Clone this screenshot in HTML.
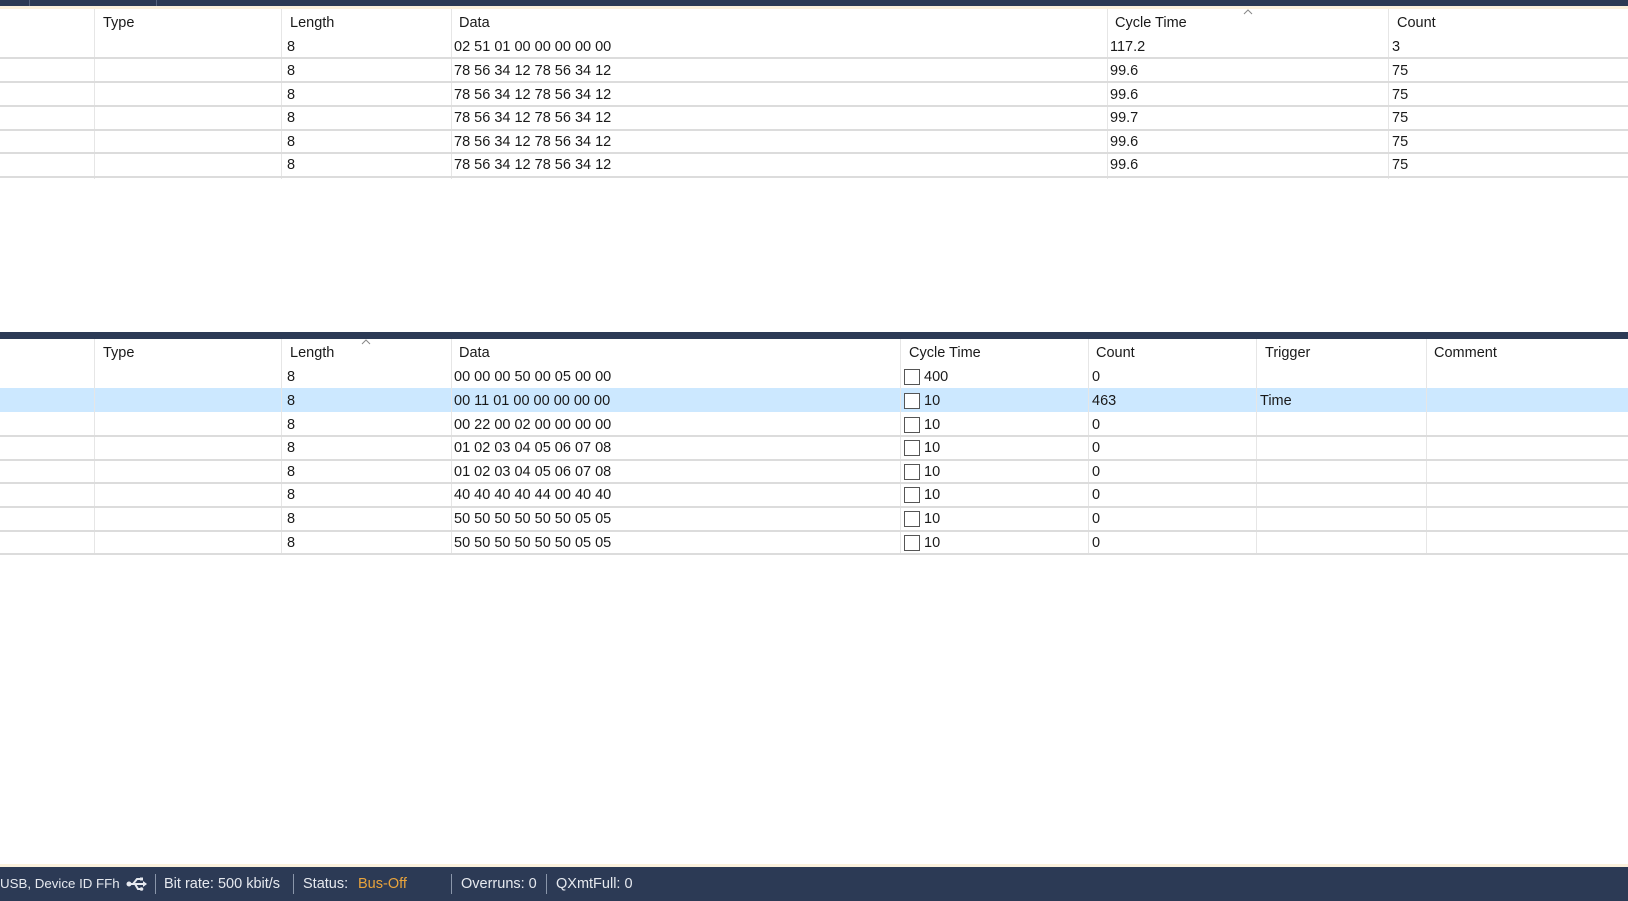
<!DOCTYPE html>
<html><head><meta charset="utf-8"><style>
*{margin:0;padding:0;box-sizing:border-box}
body{width:1628px;height:901px;overflow:hidden;background:#fff;position:relative;font-family:"Liberation Sans",sans-serif;font-size:14.5px;color:#1a1a1a}
.a{position:absolute;white-space:nowrap}
.t{position:absolute;white-space:nowrap;line-height:24px;height:24px;padding-top:1px}
.hl{position:absolute;left:0;width:1628px;height:2px;background:#dcdcdc}
.vl{position:absolute;width:1px;background:#e6e6e6}
.cb{position:absolute;width:16px;height:16px;border:1px solid #555;background:#fff}
.sep{position:absolute;top:874px;width:1px;height:20px;background:#8a96aa}
.st{position:absolute;top:874px;line-height:20px;color:#e6e9ef;font-size:14.5px;white-space:nowrap}
</style></head><body>
<div class="a" style="left:0;top:0;width:1628px;height:6px;background:#2c3a55"></div>
<div class="a" style="left:29px;top:0;width:1px;height:6px;background:#55637d"></div>
<div class="a" style="left:156px;top:0;width:1px;height:6px;background:#55637d"></div>
<div class="a" style="left:0;top:6px;width:1628px;height:3px;background:#fbf1dc"></div>

<div class="vl" style="left:94px;top:9px;height:170px"></div>
<div class="vl" style="left:281px;top:9px;height:170px"></div>
<div class="vl" style="left:451px;top:9px;height:170px"></div>
<div class="vl" style="left:1107px;top:9px;height:170px"></div>
<div class="vl" style="left:1388px;top:9px;height:170px"></div>
<div class="t" style="left:103px;top:10px">Type</div>
<div class="t" style="left:290px;top:10px">Length</div>
<div class="t" style="left:459px;top:10px">Data</div>
<div class="t" style="left:1115px;top:10px">Cycle Time</div>
<div class="t" style="left:1397px;top:10px">Count</div>
<svg class="a" style="left:1243px;top:9px" width="10" height="6" viewBox="0 0 10 6"><path d="M1 5L5 1L9 5" fill="none" stroke="#888" stroke-width="1"/></svg>

<div class="t" style="left:287px;top:34px">8</div><div class="t" style="left:454px;top:34px">02 51 01 00 00 00 00 00</div><div class="t" style="left:1110px;top:34px">117.2</div><div class="t" style="left:1392px;top:34px">3</div>
<div class="hl" style="top:57px"></div>
<div class="t" style="left:287px;top:58px">8</div><div class="t" style="left:454px;top:58px">78 56 34 12 78 56 34 12</div><div class="t" style="left:1110px;top:58px">99.6</div><div class="t" style="left:1392px;top:58px">75</div>
<div class="hl" style="top:81px"></div>
<div class="t" style="left:287px;top:82px">8</div><div class="t" style="left:454px;top:82px">78 56 34 12 78 56 34 12</div><div class="t" style="left:1110px;top:82px">99.6</div><div class="t" style="left:1392px;top:82px">75</div>
<div class="hl" style="top:105px"></div>
<div class="t" style="left:287px;top:105px">8</div><div class="t" style="left:454px;top:105px">78 56 34 12 78 56 34 12</div><div class="t" style="left:1110px;top:105px">99.7</div><div class="t" style="left:1392px;top:105px">75</div>
<div class="hl" style="top:129px"></div>
<div class="t" style="left:287px;top:129px">8</div><div class="t" style="left:454px;top:129px">78 56 34 12 78 56 34 12</div><div class="t" style="left:1110px;top:129px">99.6</div><div class="t" style="left:1392px;top:129px">75</div>
<div class="hl" style="top:152px"></div>
<div class="t" style="left:287px;top:152px">8</div><div class="t" style="left:454px;top:152px">78 56 34 12 78 56 34 12</div><div class="t" style="left:1110px;top:152px">99.6</div><div class="t" style="left:1392px;top:152px">75</div>
<div class="hl" style="top:176px"></div>

<div class="a" style="left:0;top:332px;width:1628px;height:7px;background:#2c3a55"></div>

<div class="a" style="left:0;top:388px;width:1628px;height:24px;background:#cce8ff"></div>
<div class="vl" style="left:94px;top:339px;height:215px"></div>
<div class="vl" style="left:281px;top:339px;height:215px"></div>
<div class="vl" style="left:451px;top:339px;height:215px"></div>
<div class="vl" style="left:900px;top:339px;height:215px"></div>
<div class="vl" style="left:1088px;top:339px;height:215px"></div>
<div class="vl" style="left:1256px;top:339px;height:215px"></div>
<div class="vl" style="left:1426px;top:339px;height:215px"></div>
<div class="t" style="left:103px;top:340px">Type</div>
<div class="t" style="left:290px;top:340px">Length</div>
<div class="t" style="left:459px;top:340px">Data</div>
<div class="t" style="left:909px;top:340px">Cycle Time</div>
<div class="t" style="left:1096px;top:340px">Count</div>
<div class="t" style="left:1265px;top:340px">Trigger</div>
<div class="t" style="left:1434px;top:340px">Comment</div>
<svg class="a" style="left:361px;top:339px" width="10" height="6" viewBox="0 0 10 6"><path d="M1 5L5 1L9 5" fill="none" stroke="#888" stroke-width="1"/></svg>

<div class="t" style="left:287px;top:364px">8</div><div class="t" style="left:454px;top:364px">00 00 00 50 00 05 00 00</div><div class="cb" style="left:904px;top:369px"></div><div class="t" style="left:924px;top:364px">400</div><div class="t" style="left:1092px;top:364px">0</div>
<div class="t" style="left:287px;top:388px">8</div><div class="t" style="left:454px;top:388px">00 11 01 00 00 00 00 00</div><div class="cb" style="left:904px;top:393px"></div><div class="t" style="left:924px;top:388px">10</div><div class="t" style="left:1092px;top:388px">463</div><div class="t" style="left:1260px;top:388px">Time</div>
<div class="t" style="left:287px;top:412px">8</div><div class="t" style="left:454px;top:412px">00 22 00 02 00 00 00 00</div><div class="cb" style="left:904px;top:417px"></div><div class="t" style="left:924px;top:412px">10</div><div class="t" style="left:1092px;top:412px">0</div>
<div class="hl" style="top:435px"></div>
<div class="t" style="left:287px;top:435px">8</div><div class="t" style="left:454px;top:435px">01 02 03 04 05 06 07 08</div><div class="cb" style="left:904px;top:440px"></div><div class="t" style="left:924px;top:435px">10</div><div class="t" style="left:1092px;top:435px">0</div>
<div class="hl" style="top:459px"></div>
<div class="t" style="left:287px;top:459px">8</div><div class="t" style="left:454px;top:459px">01 02 03 04 05 06 07 08</div><div class="cb" style="left:904px;top:464px"></div><div class="t" style="left:924px;top:459px">10</div><div class="t" style="left:1092px;top:459px">0</div>
<div class="hl" style="top:482px"></div>
<div class="t" style="left:287px;top:482px">8</div><div class="t" style="left:454px;top:482px">40 40 40 40 44 00 40 40</div><div class="cb" style="left:904px;top:487px"></div><div class="t" style="left:924px;top:482px">10</div><div class="t" style="left:1092px;top:482px">0</div>
<div class="hl" style="top:506px"></div>
<div class="t" style="left:287px;top:506px">8</div><div class="t" style="left:454px;top:506px">50 50 50 50 50 50 05 05</div><div class="cb" style="left:904px;top:511px"></div><div class="t" style="left:924px;top:506px">10</div><div class="t" style="left:1092px;top:506px">0</div>
<div class="hl" style="top:530px"></div>
<div class="t" style="left:287px;top:530px">8</div><div class="t" style="left:454px;top:530px">50 50 50 50 50 50 05 05</div><div class="cb" style="left:904px;top:535px"></div><div class="t" style="left:924px;top:530px">10</div><div class="t" style="left:1092px;top:530px">0</div>
<div class="hl" style="top:553px"></div>

<div class="a" style="left:0;top:864px;width:1628px;height:3px;background:#fbf1dc"></div>
<div class="a" style="left:0;top:867px;width:1628px;height:34px;background:#2c3a55"></div>
<div class="st" style="left:0;font-size:13.3px">USB, Device ID FFh</div>
<svg class="a" style="left:126px;top:876px" width="22" height="16" viewBox="0 0 22 16"><g fill="none" stroke="#e6e9ef" stroke-width="2"><path d="M2 8H20"/><path d="M7 8L11 3H15"/><path d="M9 8L12 13H15"/></g><circle cx="3" cy="8" r="2.5" fill="#e6e9ef"/><path d="M17 5L21 8L17 11Z" fill="#e6e9ef"/><rect x="14" y="1.5" width="3" height="3" fill="#e6e9ef"/><circle cx="15.5" cy="13" r="1.8" fill="#e6e9ef"/></svg>
<div class="sep" style="left:155px"></div>
<div class="st" style="left:164px">Bit rate: 500 kbit/s</div>
<div class="sep" style="left:293px"></div>
<div class="st" style="left:303px">Status:</div>
<div class="st" style="left:358px;color:#e8a33c">Bus-Off</div>
<div class="sep" style="left:451px"></div>
<div class="st" style="left:461px">Overruns: 0</div>
<div class="sep" style="left:546px"></div>
<div class="st" style="left:556px">QXmtFull: 0</div>
</body></html>
